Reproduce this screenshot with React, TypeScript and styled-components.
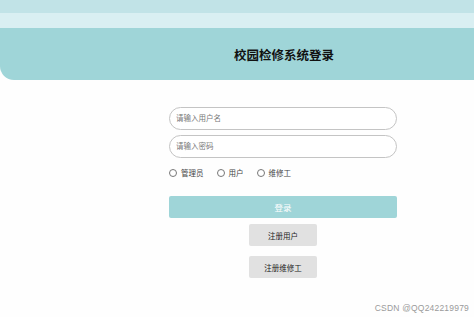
import styled, { createGlobalStyle } from 'styled-components';

const GlobalStyle = createGlobalStyle`
  html, body {
    margin: 0;
    padding: 0;
    background: #fefefe;
  }
  body {
    font-family: "Liberation Sans", "Noto Sans CJK SC", sans-serif;
    width: 474px;
    height: 317px;
    overflow: hidden;
  }
`;

const roles = ['管理员', '用户', '维修工'];

function App() {
  return (
    <Page>
      <GlobalStyle />
      <TopStrip />
      <SubStrip />
      <Header>
        <Title>校园检修系统登录</Title>
      </Header>
      <Form>
        <Input placeholder="请输入用户名" />
        <Input placeholder="请输入密码" type="password" />
        <RoleRow>
          {roles.map((r) => (
            <RoleLabel key={r}>
              <RadioCircle />
              {r}
            </RoleLabel>
          ))}
        </RoleRow>
        <LoginButton>登录</LoginButton>
        <RegisterButton>注册用户</RegisterButton>
        <RegisterButton $gap={10}>注册维修工</RegisterButton>
      </Form>
      <Watermark>CSDN @QQ242219979</Watermark>
    </Page>
  );
}

const Page = styled.div`
  position: relative;
  width: 474px;
  height: 317px;
  display: flex;
  flex-direction: column;
`;

const TopStrip = styled.div`
  height: 13px;
  background: #c1e3e7;
`;

const SubStrip = styled.div`
  height: 15px;
  background: #d9eff2;
`;

const Header = styled.div`
  height: 52px;
  background: #9fd5d8;
  border-bottom-left-radius: 14px;
  display: flex;
  align-items: center;
  padding-left: 234px;
`;

const Title = styled.h1`
  margin: 0;
  font-size: 12.5px;
  font-weight: 700;
  color: #111;
`;

const Form = styled.div`
  margin-top: 27px;
  margin-left: 169px;
  width: 228px;
  display: flex;
  flex-direction: column;
  align-items: center;
`;

const Input = styled.input`
  box-sizing: border-box;
  width: 228px;
  height: 23px;
  margin-bottom: 5px;
  padding: 0 6px;
  border: 1px solid #c4c4c4;
  border-radius: 12px;
  background: #fff;
  font-size: 7.5px;
  font-family: inherit;
  outline: none;
  &::placeholder {
    color: #777;
  }
`;

const RoleRow = styled.div`
  align-self: flex-start;
  display: flex;
  gap: 13px;
  margin-top: 4px;
`;

const RoleLabel = styled.label`
  display: flex;
  align-items: center;
  gap: 4px;
  font-size: 7.5px;
  color: #444;
`;

const RadioCircle = styled.span`
  box-sizing: border-box;
  width: 8px;
  height: 8px;
  border: 1px solid #777;
  border-radius: 50%;
  background: #fff;
`;

const LoginButton = styled.button`
  margin-top: 18px;
  width: 228px;
  height: 22px;
  border: none;
  border-radius: 2px;
  background: #9fd5d8;
  color: #fff;
  font-size: 8.5px;
  font-family: inherit;
`;

const RegisterButton = styled.button<{ $gap?: number }>`
  margin-top: ${(p) => p.$gap ?? 6}px;
  width: 68px;
  height: 22px;
  border: none;
  border-radius: 2px;
  background: #e1e1e1;
  color: #222;
  font-size: 7.5px;
  font-family: inherit;
`;

const Watermark = styled.div`
  position: absolute;
  right: 5px;
  bottom: 4px;
  font-size: 8.5px;
  color: #9a9a9a;
  letter-spacing: 0.2px;
`;

export default App;
